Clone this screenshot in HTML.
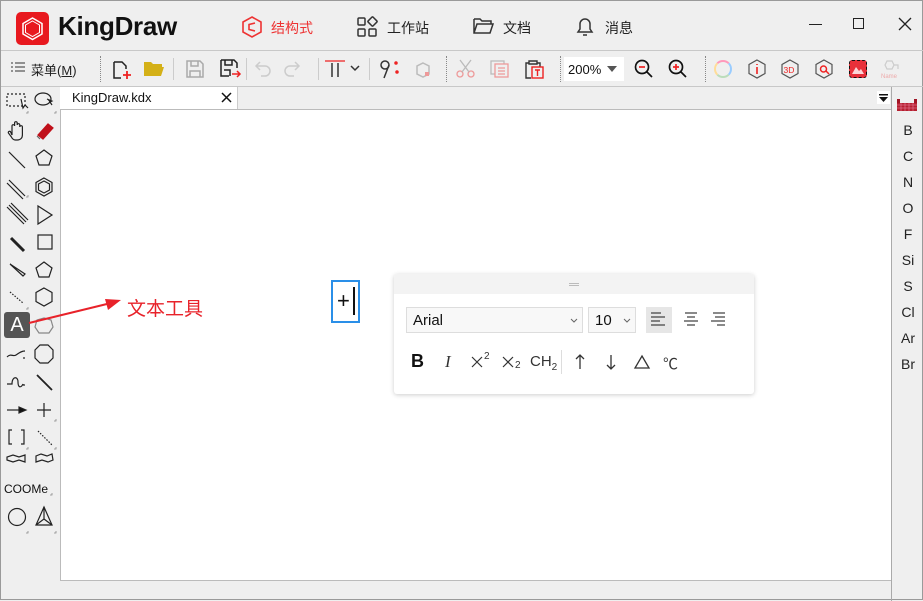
<!DOCTYPE html>
<html><head><meta charset="utf-8"><style>
*{margin:0;padding:0;box-sizing:border-box}
body{width:923px;height:600px;background:#efefef;font-family:"Liberation Sans","Noto Sans CJK SC",sans-serif;position:relative;overflow:hidden;border:1px solid #9a9a9a}
.a{position:absolute}
.t{font-size:14px;color:#222}
svg{position:absolute;overflow:visible}
</style></head><body>
<div class="a" style="left:15px;top:11px;width:33px;height:33px;background:#e8191f;border-radius:5px"></div>
<svg style="left:15px;top:11px" width="33" height="33"><polygon points="16.5,6 26,11.5 26,22 16.5,27.5 7,22 7,11.5" fill="none" stroke="#fff" stroke-width="1.5"/><polygon points="16.5,9 23.5,13 23.5,20.5 16.5,24.5 9.5,20.5 9.5,13" fill="none" stroke="#fff" stroke-width="1"/></svg>
<div class="a" style="left:57px;top:10px;font-size:26px;font-weight:bold;color:#111;letter-spacing:-0.3px">KingDraw</div>
<svg style="left:240px;top:15px" width="22" height="22"><polygon points="11,1 20,6 20,16 11,21 2,16 2,6" fill="none" stroke="#e33" stroke-width="1.6"/><path d="M14,7 L8,8.5 L8,13.5 L14,15" fill="none" stroke="#e33" stroke-width="1.6"/></svg>
<div class="a" style="left:270px;top:17px;font-size:14px;color:#e33">结构式</div>
<svg style="left:356px;top:16px" width="20" height="20" fill="none" stroke="#333" stroke-width="1.5"><rect x="1" y="1" width="7" height="7" rx="1"/><rect x="1" y="12" width="7" height="7" rx="1"/><rect x="12" y="12" width="7" height="7" rx="1"/><rect x="12" y="1" width="7" height="7" rx="1" transform="rotate(45 15.5 4.5)"/></svg>
<div class="a t" style="left:386px;top:17px">工作站</div>
<svg style="left:472px;top:16px" width="22" height="18" fill="none" stroke="#333" stroke-width="1.5"><path d="M1,2 L7,2 L9,4 L18,4 L18,7 M1,2 L1,16 L17,16 L20,7 L4,7 L1,16"/></svg>
<div class="a t" style="left:502px;top:17px">文档</div>
<svg style="left:575px;top:15px" width="18" height="22" fill="none" stroke="#333" stroke-width="1.5"><path d="M2,16 L16,16 L14,13 L14,8 A5,5 0 0 0 4,8 L4,13 Z M7,19 L11,19"/></svg>
<div class="a t" style="left:604px;top:17px">消息</div>
<div class="a" style="left:808px;top:23px;width:13px;height:1px;background:#222"></div>
<div class="a" style="left:852px;top:17px;width:11px;height:11px;border:1.2px solid #222"></div>
<svg style="left:898px;top:17px" width="12" height="12" stroke="#222" stroke-width="1.3"><path d="M0,0 L12,12 M12,0 L0,12"/></svg>
<div class="a" style="left:0;top:49px;width:923px;height:1px;background:#c8c8c8"></div>
<svg style="left:10px;top:61px" width="14" height="11" stroke="#333"><path d="M0,1h2M4,1h10M0,5h2M4,5h10M0,9h2M4,9h10"/></svg>
<div class="a" style="left:30px;top:59px;font-size:13px;color:#222">菜单(<u>M</u>)</div>
<div class="a" style="left:99px;top:55px;height:26px;border-left:1px dotted #888"></div>
<svg style="left:109px;top:58px" width="22" height="22" fill="none" stroke="#222" stroke-width="1.5"><path d="M4,3 L12,3 L16,7 L16,10 M4,3 L4,19 L11,19"/><path d="M17,12v8M13,16h8" stroke="#e22" stroke-width="1.8"/></svg>
<svg style="left:143px;top:60px" width="20" height="16"><path d="M0,1h7l2,2h9v3H3L0,15Z M3,6h17l-3,9H0Z" fill="#d4b017"/></svg>
<div class="a" style="left:172px;top:57px;height:22px;border-left:1px solid #ccc"></div>
<svg style="left:185px;top:59px" width="18" height="18" fill="none" stroke="#aaa" stroke-width="1.5"><path d="M1,1h13l3,3v13H1Z M5,1v5h7V1 M4,11h10v6H4Z"/></svg>
<svg style="left:219px;top:58px" width="22" height="20" fill="none" stroke="#222" stroke-width="1.5"><path d="M1,1h13l3,3v5 M1,1v16h8 M5,1v5h7V1 M4,11h6v6"/><path d="M12,15h8M17,12l3,3-3,3" stroke="#e22"/></svg>
<div class="a" style="left:245px;top:57px;height:22px;border-left:1px solid #ccc"></div>
<svg style="left:254px;top:60px" width="60" height="16" fill="none" stroke="#ccc" stroke-width="1.5"><path d="M5,1L1,5l4,4M1,5h9a5,5 0 0 1 0,10H6"/><path d="M40,1l4,4-4,4M44,5h-9a5,5 0 0 0 0,10h4"/></svg>
<div class="a" style="left:317px;top:57px;height:22px;border-left:1px solid #ccc"></div>
<svg style="left:324px;top:59px" width="40" height="18" fill="none" stroke-width="1.5"><path d="M0,1h20" stroke="#e44"/><path d="M7,3v14M13,3v14" stroke="#333"/><path d="M26,6l4,4 4-4" stroke="#333"/></svg>
<div class="a" style="left:368px;top:57px;height:22px;border-left:1px solid #ccc"></div>
<svg style="left:378px;top:59px" width="22" height="18" fill="none" stroke="#333" stroke-width="1.5"><circle cx="6" cy="5" r="4"/><path d="M10,5L5,18"/><circle cx="17" cy="3" r="1" fill="#e22" stroke="#e22"/><circle cx="18" cy="12" r="1" fill="#e22" stroke="#e22"/></svg>
<svg style="left:414px;top:58px" width="20" height="20" fill="none" stroke="#bbb" stroke-width="1.5"><polygon points="8,4 14,7 14,15 8,18 2,15 2,7"/><rect x="10" y="13" width="4" height="4" fill="#e99" stroke="none"/></svg>
<div class="a" style="left:445px;top:55px;height:26px;border-left:1px dotted #888"></div>
<svg style="left:455px;top:58px" width="20" height="20" fill="none" stroke="#e99" stroke-width="1.3"><circle cx="4" cy="15" r="3"/><circle cx="15" cy="15" r="3"/><path d="M6,13L15,1M13,13L4,1" stroke="#bbb"/></svg>
<svg style="left:489px;top:59px" width="20" height="18" fill="none" stroke="#bbb" stroke-width="1.3"><rect x="1" y="1" width="13" height="13"/><rect x="5" y="4" width="13" height="13" fill="#efefef" stroke="#e99"/><path d="M8,8h7M8,11h7M8,14h7" stroke="#e99"/></svg>
<svg style="left:524px;top:58px" width="20" height="20" fill="none" stroke="#333" stroke-width="1.4"><path d="M4,4h-3v15h5 M4,2h8v3H4Z M12,4h3v4"/><rect x="7" y="8" width="11" height="11" stroke="#e22"/><path d="M10,11h5M12.5,11v6" stroke="#e22"/></svg>
<div class="a" style="left:559px;top:55px;height:26px;border-left:1px dotted #888"></div>
<div class="a" style="left:563px;top:56px;width:60px;height:24px;background:#fff"></div>
<div class="a" style="left:567px;top:61px;font-size:13px;color:#111">200%</div>
<svg style="left:606px;top:65px" width="10" height="6"><polygon points="0,0 10,0 5,6" fill="#555"/></svg>
<svg style="left:633px;top:58px" width="20" height="20" fill="none" stroke="#111" stroke-width="1.7"><circle cx="8" cy="8" r="6.5"/><path d="M13,13l5,5"/><path d="M5,8h6" stroke="#e22"/></svg>
<svg style="left:667px;top:58px" width="20" height="20" fill="none" stroke="#111" stroke-width="1.7"><circle cx="8" cy="8" r="6.5"/><path d="M13,13l5,5"/><path d="M5,8h6M8,5v6" stroke="#e22"/></svg>
<div class="a" style="left:704px;top:55px;height:26px;border-left:1px dotted #888"></div>
<div class="a" style="left:713px;top:59px;width:18px;height:18px;border-radius:50%;border:2px solid #c9b;border-color:#f9b #9cf #bdb #fd9"></div>
<svg style="left:746px;top:58px" width="20" height="20" fill="none" stroke="#555" stroke-width="1.2"><polygon points="10,1 18,5.5 18,14.5 10,19 2,14.5 2,5.5"/><path d="M10,8v7M10,5v1" stroke="#e22" stroke-width="1.6"/></svg>
<svg style="left:779px;top:58px" width="20" height="20" fill="none" stroke="#555" stroke-width="1.2"><polygon points="10,1 18,5.5 18,14.5 10,19 2,14.5 2,5.5"/><text x="3.5" y="14" font-size="8.5" fill="#e22" stroke="none" font-family="Liberation Sans">3D</text></svg>
<svg style="left:813px;top:58px" width="20" height="20" fill="none" stroke="#555" stroke-width="1.2"><polygon points="10,1 18,5.5 18,14.5 10,19 2,14.5 2,5.5"/><circle cx="9.5" cy="10" r="3" stroke="#e22" stroke-width="1.5"/><path d="M12,12l3,3" stroke="#e22" stroke-width="1.5"/></svg>
<div class="a" style="left:848px;top:59px;width:18px;height:18px;background:#e8303a;border-radius:3px;border:1.5px dashed #111"></div>
<svg style="left:851px;top:63px" width="12" height="10"><polygon points="0,10 4,3 7,7 9,5 12,10" fill="#fff" opacity=".8"/></svg>
<svg style="left:880px;top:57px" width="22" height="22" fill="none" stroke="#ccc" stroke-width="1.2"><polygon points="6,3 11,3 13,7 11,11 6,11 4,7"/><path d="M13,7h4v4"/><text x="0" y="20" font-size="6" fill="#eaa" stroke="none" font-family="Liberation Sans">Name</text></svg>
<div class="a" style="left:0;top:85px;width:923px;height:1px;background:#c8c8c8"></div>
<div class="a" style="left:59px;top:86px;width:178px;height:23px;background:#fff;border-right:1px solid #ccc"></div>
<div class="a" style="left:71px;top:89px;font-size:13px;color:#111">KingDraw.kdx</div>
<svg style="left:221px;top:92px" width="9" height="9" stroke="#111" stroke-width="1.5"><path d="M0,0L9,9M9,0L0,9"/></svg>
<div class="a" style="left:876px;top:90px;width:13px;height:13px;background:#fff"></div>
<svg style="left:878px;top:93px" width="9" height="8"><rect width="9" height="1.5" fill="#111"/><polygon points="0,3 9,3 4.5,8" fill="#111"/></svg>
<div class="a" style="left:59px;top:108px;width:832px;height:472px;background:#fff;border:1px solid #bbb"></div>
<div class="a" style="left:890px;top:86px;width:1px;height:514px;background:#aaa"></div>
<svg style="left:896px;top:98px" width="20" height="12"><rect x="0" y="0" width="3" height="12" fill="#a01525"/><rect x="17" y="0" width="3" height="12" fill="#a01525"/><rect x="0" y="4" width="20" height="8" fill="#b52030"/><path d="M0,6h20M0,9h20M4,4v8M8,4v8M12,4v8M16,4v8" stroke="#e8a" stroke-width=".5"/></svg>
<div class="a" style="left:891px;top:116px;width:32px;text-align:center;font-size:14px;line-height:26px;color:#222">B<br>C<br>N<br>O<br>F<br>Si<br>S<br>Cl<br>Ar<br>Br</div>
<svg style="left:0;top:86px" width="58" height="450" fill="none" stroke="#222" stroke-width="1.2">
<rect x="6" y="7" width="18" height="12" stroke-dasharray="2,2"/>
<path d="M20,12l2,9 2-3 3,3" fill="#fff"/>
<ellipse cx="42" cy="12" rx="8" ry="6"/><path d="M46,12l5,2-2,1 2,3" fill="#222"/>
<path d="M11,48v-9a1.3,1.3 0 0 1 2.6,0v-3a1.3,1.3 0 0 1 2.6,0v2a1.3,1.3 0 0 1 2.6,0v2a1.3,1.3 0 0 1 2.6,0v8c0,3-2,5-5,5h-2c-2,0-3-1-4-3l-3-4a1.3,1.3 0 0 1 2-1.5Z"/>
<path d="M37,48l10-11 5,4-10,11Z" fill="#c0101a" stroke="#c0101a"/><path d="M36,49l3,3" stroke="#666"/>
<path d="M8,65l16,16"/><polygon points="43,63 51,69 48,78 38,78 35,69"/>
<path d="M8,93l16,16M6,96l16,16"/><polygon points="43,91 51,95.5 51,104.5 43,109 35,104.5 35,95.5"/><polygon points="43,94 48.5,97 48.5,103 43,106 37.5,103 37.5,97"/>
<path d="M6,120l17,17M8,118l17,17M10,116l17,17"/><polygon points="37,119 37,137 51,128"/>
<path d="M10,151L23,164" stroke-width="3"/><rect x="37" y="148" width="14" height="14"/>
<path d="M9,177l13,12 2-2Z"/><polygon points="43,175 51,181 48,190 38,190 35,181"/>
<path d="M9,205l13,11" stroke-dasharray="1.5,1.5"/><polygon points="43,201 51,205.5 51,214.5 43,219 35,214.5 35,205.5"/>
<polygon points="43,231 50,233 52,240 48,246 38,246 34,240 36,233" stroke="#888"/>
<path d="M6,270c4-4,6,0,9-2s5-4,9-4"/><path d="M23,270v2" /><polygon points="39,258 47,258 52,263 52,271 47,276 39,276 34,271 34,263"/>
<path d="M6,297h5c0,-8 6,-8 6,-2s3,6 5,2"/><path d="M23,297v2"/><path d="M36,288l15,15" stroke-width="1.8"/>
<path d="M6,323h14"/><polygon points="25,323 18,320 18,326" fill="#111"/><path d="M43,316v14M36,323h14"/>
<path d="M11,343h-3v14h3M20,343h3v14h-3"/><path d="M37,344l14,14" stroke-dasharray="1.5,1.5"/>
<path d="M6,373l6,2 6-2 6,2v-7l-6,2-6-2-6,2Z"/><path d="M35,375l6-2 6,2 5-2-1-6-5,2-6-2-5,2Z"/>
<circle cx="16" cy="430" r="8.5"/><polygon points="43,420 35,438 51,438"/><path d="M43,420L43,432L35,438M43,432L51,438"/>
<path d="M25,26l2,0 0-2M53,26l2,0 0-2M25,110l2,0 0-2M25,222l2,0 0-2M53,334l2,0 0-2M25,362l2,0 0-2M53,362l2,0 0-2M49,408l2,0 0-2M25,446l2,0 0-2M53,446l2,0 0-2" stroke="#888" stroke-width=".8"/>
</svg>
<div class="a" style="left:3px;top:311px;width:26px;height:26px;background:#555;border-radius:3px;color:#fff;font-size:20px;text-align:center;line-height:26px">A</div>
<div class="a" style="left:3px;top:481px;font-size:12px;color:#111">COOMe</div>
<svg style="left:0;top:0" width="923" height="600"><path d="M28,322L110,302" stroke="#e8222a" stroke-width="2"/><polygon points="120,299 104,298 107,309" fill="#e8222a"/></svg>
<div class="a" style="left:126px;top:293px;font-size:19px;color:#e8222a">文本工具</div>
<div class="a" style="left:330px;top:279px;width:29px;height:43px;border:2px solid #2a8fe8"></div>
<div class="a" style="left:336px;top:287px;font-size:22px;color:#111">+</div>
<div class="a" style="left:352px;top:286px;width:2px;height:28px;background:#111"></div>
<div class="a" style="left:393px;top:273px;width:360px;height:120px;background:#fff;border-radius:3px;box-shadow:0 1px 5px rgba(0,0,0,.2)"></div>
<div class="a" style="left:393px;top:273px;width:360px;height:20px;background:#f3f3f3;border-radius:3px 3px 0 0"></div>
<div class="a" style="left:568px;top:282px;width:10px;height:3px;border-top:1px solid #bbb;border-bottom:1px solid #bbb"></div>
<div class="a" style="left:405px;top:306px;width:177px;height:26px;border:1px solid #ddd;background:#f8f8f8"></div>
<div class="a" style="left:412px;top:311px;font-size:15px;color:#111">Arial</div>
<svg style="left:570px;top:318px" width="6" height="4" fill="none" stroke="#666"><path d="M0,0l3,3 3-3"/></svg>
<div class="a" style="left:587px;top:306px;width:48px;height:26px;border:1px solid #ddd;background:#f8f8f8"></div>
<div class="a" style="left:594px;top:311px;font-size:15px;color:#111">10</div>
<svg style="left:623px;top:318px" width="6" height="4" fill="none" stroke="#666"><path d="M0,0l3,3 3-3"/></svg>
<div class="a" style="left:645px;top:306px;width:26px;height:26px;background:#e6e6e6"></div>
<svg style="left:650px;top:311px" width="80" height="16" stroke="#444" stroke-width="1.2"><path d="M0,1h10M0,5h14M0,9h9M0,13h14"/><path d="M34,1h12M36,5h8M33,9h14M36,13h8"/><path d="M62,1h12M64,5h10M60,9h14M66,13h8"/></svg>
<div class="a" style="left:410px;top:350px;font-size:18px;font-weight:bold;color:#111">B</div>
<div class="a" style="left:444px;top:351px;font-size:17px;font-style:italic;color:#333;font-family:'Liberation Serif',serif">I</div>
<svg style="left:470px;top:353px" width="90" height="16" fill="none" stroke="#333" stroke-width="1.2"><path d="M1,3l10,10M11,3L1,13"/><path d="M32,3l10,10M42,3L32,13"/></svg>
<div class="a" style="left:483px;top:350px;font-size:10px;color:#333">2</div>
<div class="a" style="left:514px;top:359px;font-size:10px;color:#333">2</div>
<div class="a" style="left:529px;top:352px;font-size:15px;color:#333">CH<sub style="font-size:10px">2</sub></div>
<div class="a" style="left:560px;top:349px;width:1px;height:24px;background:#ddd"></div>
<svg style="left:574px;top:353px" width="80" height="16" fill="none" stroke="#333" stroke-width="1.3"><path d="M5,1v14M1,5l4-4 4,4"/><path d="M36,1v14M32,11l4,4 4-4"/><polygon points="67,2 74,14 60,14"/></svg>
<div class="a" style="left:662px;top:352px;font-size:15px;color:#333">℃</div>
</body></html>
